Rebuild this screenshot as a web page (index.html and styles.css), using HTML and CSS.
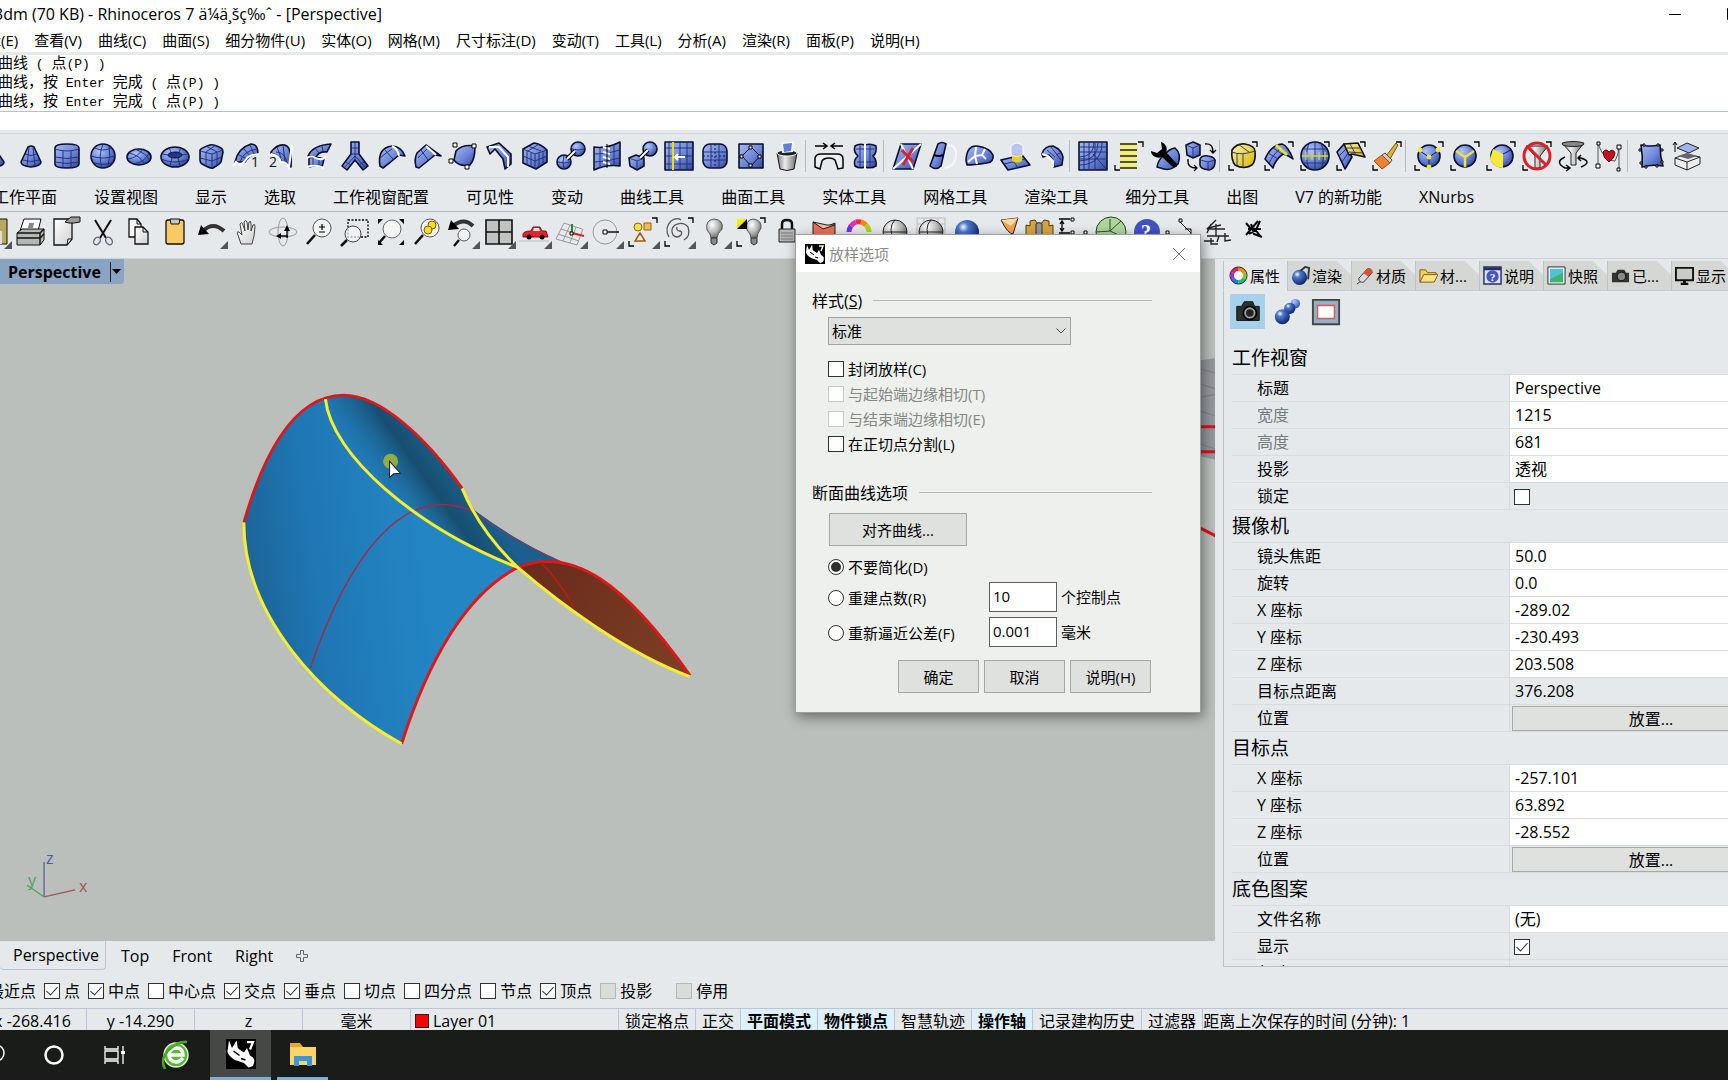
FILE: index.html
```html
<!DOCTYPE html>
<html lang="zh-CN">
<head>
<meta charset="utf-8">
<title>Rhinoceros 7 - [Perspective]</title>
<link rel="stylesheet" href="styles.css">
</head>
<body>
<svg class="defs" aria-hidden="true">
  <defs>
    <linearGradient id="bl" x1="0" y1="0" x2="1" y2="1"><stop offset="0" stop-color="#a9b9f4"/><stop offset=".55" stop-color="#6d86d8"/><stop offset="1" stop-color="#33479c"/></linearGradient>
    <radialGradient id="ball" cx=".35" cy=".3" r=".8"><stop offset="0" stop-color="#b4c6ff"/><stop offset=".5" stop-color="#6c88dc"/><stop offset="1" stop-color="#2f438f"/></radialGradient>
    <radialGradient id="deep" cx=".35" cy=".3" r=".8"><stop offset="0" stop-color="#fff"/><stop offset=".25" stop-color="#4d7bd0"/><stop offset="1" stop-color="#04175c"/></radialGradient>
    <radialGradient id="gray" cx=".35" cy=".3" r=".8"><stop offset="0" stop-color="#fff"/><stop offset=".5" stop-color="#b9bbb9"/><stop offset="1" stop-color="#555"/></radialGradient>
    <linearGradient id="metal" x1="0" x2="1"><stop offset="0" stop-color="#777"/><stop offset=".4" stop-color="#eee"/><stop offset="1" stop-color="#666"/></linearGradient>
    <linearGradient id="yel" x1="0" y1="0" x2="1" y2="1"><stop offset="0" stop-color="#fff59a"/><stop offset="1" stop-color="#d9b400"/></linearGradient>
    <linearGradient id="paper" x1="0" y1="0" x2="1" y2="1"><stop offset="0" stop-color="#fff"/><stop offset="1" stop-color="#cfd1cf"/></linearGradient>
    <linearGradient id="front" gradientUnits="userSpaceOnUse" x1="245" y1="330" x2="480" y2="300"><stop offset="0" stop-color="#1d6396"/><stop offset=".3" stop-color="#1f77b4"/><stop offset=".75" stop-color="#2485c4"/><stop offset="1" stop-color="#2485c4"/></linearGradient>
    <linearGradient id="inner" gradientUnits="userSpaceOnUse" x1="350" y1="210" x2="420" y2="160"><stop offset="0" stop-color="#1f78b5" stop-opacity="0"/><stop offset=".65" stop-color="#184e70"/><stop offset="1" stop-color="#1b5f8d"/></linearGradient>
    <linearGradient id="back" gradientUnits="userSpaceOnUse" x1="520" y1="260" x2="680" y2="410"><stop offset="0" stop-color="#65281a"/><stop offset="1" stop-color="#7e3e24"/></linearGradient>
    <symbol id="br" viewBox="0 0 32 32"><path d="M25 2h5v5M2 25v5h5" fill="none" stroke="#000" stroke-width="1.3"/></symbol>
    <symbol id="fl" viewBox="0 0 32 32" overflow="visible"><path d="M33 25v8h-8z" fill="#555"/></symbol>
    <symbol id="lens" viewBox="0 0 32 32"><circle cx="19" cy="12" r="9" fill="#f3f5f5" stroke="#555"/><path d="M12 19L4 28" stroke="#111" stroke-width="2.6"/></symbol>
    <symbol id="rhino" viewBox="0 0 20 20"><path d="M0 0h20v20H0z" fill="#000"/><path d="M2 1l2 5 3-5c1 3 0 5 2 6l3 2 2-3 2 5c4 2 3 4 2 7l-3 1-3-3-6-2C3 12 1 10 1 8z" fill="#fff"/><path d="M5 8l4 3M10 13l3 1" stroke="#000"/><path d="M14 2h4l-2 5" stroke="#fff" fill="none" stroke-width="1.5"/></symbol>
  </defs>
</svg>

<header class="titlebar">
  <h1>3dm (70 KB) - Rhinoceros 7 ä¼ä¸šç‰ˆ - [Perspective]</h1>
  <div class="winbtns">
    <button aria-label="最小化"><svg viewBox="0 0 12 12"><path d="M0 6.5h12" stroke="#000"/></svg></button>
    <button aria-label="最大化"><svg viewBox="0 0 12 12"><path d="M.5.5h11v11H.5z" stroke="#000" fill="none"/></svg></button>
  </div>
</header>
<nav class="menu">
  <a href="#">编辑(E)</a><a href="#">查看(V)</a><a href="#">曲线(C)</a><a href="#">曲面(S)</a><a href="#">细分物件(U)</a><a href="#">实体(O)</a><a href="#">网格(M)</a><a href="#">尺寸标注(D)</a><a href="#">变动(T)</a><a href="#">工具(L)</a><a href="#">分析(A)</a><a href="#">渲染(R)</a><a href="#">面板(P)</a><a href="#">说明(H)</a>
</nav>
<section class="history">
  <p>曲线<span> ( </span>点<span>(P) )</span></p>
  <p>曲线，按<span> Enter </span>完成<span> ( </span>点<span>(P) )</span></p>
  <p>曲线，按<span> Enter </span>完成<span> ( </span>点<span>(P) )</span></p>
</section>
<input class="command" aria-label="指令">

<div class="toolbar surface">
  <button aria-label="金字塔"><svg viewBox="0 0 32 32"><path class="b" d="M14 6L25 22Q25 26 16 27Q7 26 6 22z"/></svg></button>
  <button aria-label="圆锥"><svg viewBox="0 0 32 32"><path class="b" d="M13 7Q16 5 19 7L26 22Q26 26 16 27Q6 26 6 22z"/><path class="l" d="M14 7L12 26M18 7L20 26M10 14Q16 17 22 14M8 20Q16 23 24 20"/></svg></button>
  <button aria-label="圆柱"><svg viewBox="0 0 32 32"><path class="b" d="M4 8Q4 4 16 4T28 8V24Q28 28 16 28T4 24z"/><path class="l" d="M4 9Q16 13 28 9M12 11V28M20 11V28M4 17Q16 20 28 17M4 22Q16 25 28 22"/></svg></button>
  <button aria-label="球体"><svg viewBox="0 0 32 32"><circle class="s" cx="16" cy="16" r="12"/><path class="l" d="M4 16Q16 20 28 16M16 4Q11 16 15 28M22 6Q24 16 21 26M8 8Q16 12 24 8M7 23Q16 26 25 23"/></svg></button>
  <button aria-label="椭圆体"><svg viewBox="0 0 32 32"><ellipse class="s" cx="16" cy="17" rx="12" ry="8"/><path class="l" d="M6 13Q16 15 22 24M12 9Q24 14 26 20M5 19Q14 18 20 9M11 24Q22 22 26 13"/></svg></button>
  <button aria-label="环状体"><svg viewBox="0 0 32 32"><ellipse class="s" cx="16" cy="17" rx="14" ry="10"/><ellipse cx="16" cy="15" rx="7" ry="3" fill="#24367e" stroke="#0b1240"/><path class="l" d="M10 8L12 12M22 8L20 12M3 14L9 15M29 14L23 15M11 26L13 18M21 26L19 18M2 19Q16 25 30 19"/></svg></button>
  <button aria-label="圆角方块"><svg viewBox="0 0 32 32"><path class="b" d="M5 10Q6 8 15 5Q18 4 26 8Q28 9 28 12L26 22Q25 24 18 28Q16 29 7 24Q5 23 5 20z"/><path class="l" d="M5 11L17 14L28 10M17 14V28M11 6L22 12M21 5L11 12M11 12V26M22 13V25M5 18L17 21L27 17"/></svg></button>
  <button aria-label="边缘圆角"><svg viewBox="0 0 32 32"><path class="b" d="M4 22Q7 8 20 4Q27 4 27 14Q19 14 14 22z"/><path class="l" d="M8 15L16 19M13 9L19 16M19 5L23 14M9 22Q12 11 26 9"/><path d="M2 27l3-5 4 3 4-3 4-5 4-2 7-1" class="w"/><text x="20" y="27" class="n">1</text></svg></button>
  <button aria-label="双重圆角"><svg viewBox="0 0 32 32"><path class="b" d="M4 12Q12 2 20 6Q25 10 24 27Q20 22 15 22Q12 15 4 13z"/><path class="l" d="M10 7L14 18M16 5L18 22M9 12Q18 12 20 23"/><path d="M4 14q8 1 10 8 6 0 8 5l3-22" class="w"/><text x="2" y="27" class="n">2</text></svg></button>
  <button aria-label="混接曲面"><svg viewBox="0 0 32 32"><path class="b" d="M5 16Q10 5 28 4L24 12Q16 11 13 17z"/><path class="b" d="M6 18Q14 16 21 19L19 27Q13 25 6 27z"/><path class="l" d="M12 8L16 13M19 6L20 11M10 18V26M16 18V25"/><path d="M4 18q4-3 9 0t10-1M4 27q8-3 17 1" class="w"/></svg></button>
  <button aria-label="圆管"><svg viewBox="0 0 32 32"><path class="b" d="M12 2h8v12l9 12-5 4-8-10-8 10-5-4 9-12z"/><path class="l" d="M16 2v18M12 8h8M12 14h8M7 22l5 3M25 22l-5 3M16 16L5 28M16 16L27 28"/></svg></button>
  <button aria-label="曲面一"><svg viewBox="0 0 32 32"><path class="b" d="M5 26Q2 8 17 6Q26 6 30 16L24 15Q16 22 8 28z"/><path class="l" d="M10 10L18 19M5 18Q12 12 17 9"/><path d="M17 6Q23 9 24 16" class="w"/></svg></button>
  <button aria-label="曲面二"><svg viewBox="0 0 32 32"><path class="b" d="M5 27Q3 19 6 13L15 5L30 16L24 15L8 28z"/><path class="l" d="M10 10L17 20M7 18L16 9"/><path d="M15 6L25 15" class="w"/></svg></button>
  <button aria-label="控制点曲面"><svg viewBox="0 0 32 32"><path class="b" d="M9 11Q15 4 28 6Q28 20 23 25Q12 27 7 20z"/><path class="h" d="M6 3h4v4H6zM25 4h4v4h-4zM2 19h4v4H2zM18 25h4v4h-4z"/></svg></button>
  <button aria-label="偏移曲面"><svg viewBox="0 0 32 32"><path class="b" d="M4 7L16 3L28 14V24L22 29L20 19L12 9L7 14z"/><path class="w" d="M6 7h10l9 10v10"/></svg></button>
  <button aria-label="方块"><svg viewBox="0 0 32 32"><path class="b" d="M4 9L15 3Q22 4 28 10V22L17 29L4 23z"/><path class="l" d="M4 9L16 14L28 10M16 14V29M8 11V25M12 13V27M20 13V27M24 11V24M4 16L16 21L28 16M9 6L22 11M20 4L9 11"/></svg></button>
  <button aria-label="衔接"><svg viewBox="0 0 32 32"><circle class="s" cx="23" cy="9" r="7"/><circle class="s" cx="9" cy="22" r="7"/><path class="l" d="M3 22q6 2 12 0M9 15q-2 7 0 14M17 9q6 2 12 0"/><path d="M12 19l8-8" stroke="#000" stroke-width="4"/><path d="M12 19l8-8" stroke="#fff" stroke-width="2"/></svg></button>
  <button aria-label="缝合"><svg viewBox="0 0 32 32"><path class="b" d="M3 7Q15 9 29 2V26Q16 24 3 30z"/><path class="l" d="M3 14Q15 15 29 10M3 22Q15 22 29 18M9 8V28M23 5V26"/><path class="w" d="M12 7l7 2M12 12l7 2M12 17l7 2M12 22l7 2"/><path d="M16 4v24" stroke="#000"/></svg></button>
  <button aria-label="转换"><svg viewBox="0 0 32 32"><circle class="s" cx="23" cy="9" r="7"/><path class="b" d="M2 18L9 15L17 18V26L10 30L3 26z"/><path class="l" d="M2 18L10 21L17 18M10 21V30"/><path d="M13 18l8-8" stroke="#000" stroke-width="4"/><path d="M13 18l8-8" stroke="#fff" stroke-width="2"/></svg></button>
  <button aria-label="插入结点"><svg viewBox="0 0 32 32"><path class="b" d="M2 2h28v28H2z"/><path class="l" d="M2 8h28M2 16h28M2 24h28M6 2v28M17 2v28M24 2v28"/><path d="M10 2v28" stroke="#e8e000" stroke-width="2"/><path class="w" d="M22 17H12l3-3m-3 3l3 3"/></svg></button>
  <button aria-label="重建曲面"><svg viewBox="0 0 32 32"><rect class="b" x="4" y="4" width="24" height="24" rx="7"/><path class="l" d="M4 12h24M4 20h24M12 4v24M20 4v24"/><path d="M4 16h24M16 4v24" stroke="#101850" stroke-dasharray="2 2"/></svg></button>
  <button aria-label="显示控制点"><svg viewBox="0 0 32 32"><path class="b" d="M4 4h24v24H4z"/><path d="M16 7L25 16L16 26L7 16z" fill="none" stroke="#111"/><path class="h" d="M14 6h3v3h-3zM23 15h3v3h-3zM14 24h3v3h-3zM5 15h3v3H5z"/></svg></button>
  <button aria-label="删除"><svg viewBox="0 0 32 32"><path d="M6 13L9 29Q16 32 23 29L26 13z" fill="url(#metal)" stroke="#111"/><ellipse cx="16" cy="13" rx="10" ry="3" fill="#222" stroke="#eee"/><path d="M10 3l13-2-1 11-11 1z" fill="#f4f6fb"/><path d="M12 4l9-1-1 8-7 1z" fill="#5f7ed8"/></svg></button>
  <i></i>
  <button aria-label="对齐边缘"><svg viewBox="0 0 32 32"><path d="M2 6h11M30 6H19M10 3l4 3-4 3M22 3l-4 3 4 3" fill="none" stroke="#000" stroke-width="1.5"/><path d="M2 27V18Q3 14 8 14H24Q30 14 30 19V28L25 29L22 20Q20 18 16 18Q11 18 9 21L7 29z" fill="#eceeee" stroke="#000" stroke-width="1.5"/></svg></button>
  <button aria-label="对称"><svg viewBox="0 0 32 32"><path class="b" d="M6 6Q10 3 16 5Q22 3 27 6Q28 13 24 16Q28 20 27 26Q22 29 16 27Q10 29 6 26Q4 20 9 16Q4 12 6 6z"/><path class="l" d="M7 9h18M8 22h18M11 5v22M21 5v22"/><path class="w" d="M16 4v25"/></svg></button>
  <i></i>
  <button aria-label="取消修剪"><svg viewBox="0 0 32 32"><path class="b" d="M10 4H30L22 29H2z"/><path class="w" d="M10 4L22 29M30 4L2 29"/><path d="M11 10L22 22M22 8L12 25" stroke="#d5232f" stroke-width="3"/></svg></button>
  <button aria-label="板材"><svg viewBox="0 0 32 32"><path d="M18 28Q30 26 29 12Q28 4 20 6" fill="none" stroke="#f5f7f7" stroke-width="2"/><path class="b" d="M11 4Q15 1 19 4L14 26Q9 31 3 26z"/><path d="M7 15q5 2 9 0" stroke="#000" stroke-width="2" fill="none"/></svg></button>
  <button aria-label="嵌面"><svg viewBox="0 0 32 32"><path class="b" d="M3 20Q4 5 14 6Q27 8 30 15Q31 22 24 23Q10 25 4 25z"/><path class="w" d="M12 16l7-1 4 4M12 16l-7 6M12 16l1-9M19 15l3-6M14 24l-2-8"/></svg></button>
  <button aria-label="拉伸面"><svg viewBox="0 0 32 32"><path class="b" d="M2 20L23 15L31 25L9 30z"/><path class="l" d="M12 17L19 28M5 24L27 19"/><path d="M13 14v7q5 3 10 0v-7z" fill="#e6cf27"/><path d="M12 6v9q6 3 12 0V6q-6-6-12 0z" fill="#b0bcf0" opacity=".8" stroke="#fff"/></svg></button>
  <button aria-label="弯管"><svg viewBox="0 0 32 32"><path class="b" d="M7 14Q9 6 18 6Q27 10 28 17L27 25L19 27L18 20L14 15L8 17z"/><path class="l" d="M12 10L20 17M16 7L26 20M21 15l6-3"/><path class="w" d="M7 14l6 2 5 5v6"/></svg></button>
  <i></i>
  <button aria-label="网格"><svg viewBox="0 0 32 32"><path class="b" d="M2 2h28v28H2z"/><path class="l" d="M2 7h28M2 12h28M7 2v28M12 2v28M2 17Q17 17 17 2M2 21Q21 21 21 2M2 25Q25 25 25 2M16 14L30 30M2 19H30M18 2V30"/></svg></button>
  <button aria-label="点列"><svg viewBox="0 0 32 32"><use href="#br"/><path d="M7 3h17v26H7z" fill="#f4ec7c"/><path d="M7 4h17M7 10h17M7 16h17M7 22h17M7 28h17" stroke="#222" stroke-width="1.5"/></svg></button>
  <button aria-label="网格工具"><svg viewBox="0 0 32 32"><path class="b" d="M8 27Q9 20 15 15Q20 9 26 8Q33 14 29 24Q22 31 15 29z"/><path d="M12 2C17 4 19 8 17 12L28 24Q29 28 24 27L13 17C8 19 2 16 2 11L8 13L13 9z" fill="#000"/></svg></button>
  <button aria-label="转换网格"><svg viewBox="0 0 32 32"><path class="b" d="M1 5L8 2L15 5V15L8 18L2 15z"/><path class="b" d="M15 19Q17 15 23 16Q31 17 30 22Q30 29 24 30Q15 29 15 25z"/><path class="l" d="M1 5L8 8L15 5M8 8V18M15 20L23 22L30 20M23 22V30"/><path d="M20 4q8-1 8 8m-3-2l3 3 3-3M3 19q-1 9 8 9m-2-3l3 3-3 3" fill="none" stroke="#000" stroke-width="1.3"/></svg></button>
  <i></i>
  <button aria-label="细分"><svg viewBox="0 0 32 32"><use href="#br"/><path class="y" d="M5 10Q10 3 18 4Q28 6 28 11Q29 21 25 25Q17 30 8 25Q4 20 5 10z"/><path class="l" d="M5 12Q14 16 28 11M16 14V28M11 4L22 12M10 13V27"/></svg></button>
  <button aria-label="桥接"><svg viewBox="0 0 32 32"><use href="#br"/><path class="b" d="M2 19Q8 5 19 4Q25 6 30 19Q25 15 20 14Q12 20 10 28z"/><path class="l" d="M5 13L15 19M10 8L19 14M6 23Q12 12 18 8"/><path d="M13 5L24 15" stroke="#eee326" stroke-width="3"/></svg></button>
  <button aria-label="细分球"><svg viewBox="0 0 32 32"><use href="#br"/><circle class="s" cx="16" cy="16" r="14"/><path class="l" d="M2 16h28M4 9h24M4 23h24M16 2v28M10 3q-5 13 0 26M22 3q5 13 0 26"/><path d="M3 16h26" stroke="#e8df3c" stroke-width="1.5"/><path d="M7 12v8M13 12v8M20 12v8M26 12v8" stroke="#e8df3c"/></svg></button>
  <button aria-label="折边"><svg viewBox="0 0 32 32"><use href="#br"/><path class="b" d="M2 12L9 4L17 17L10 29z"/><path class="y" d="M9 4L23 3L30 17L17 14L14 15z"/><path class="l" d="M4 16L12 8M7 22L14 12M12 8L26 8M14 12L28 13M15 4L21 15"/></svg></button>
  <button aria-label="笔刷"><svg viewBox="0 0 32 32"><use href="#br"/><path d="M25 3l2 2-8 14-4-3z" fill="#d9b437" stroke="#7a5a10"/><path d="M14 13l7 7-2 3-8-8z" fill="#ccc" stroke="#555"/><path d="M11 15l8 8-8 6-8-8z" fill="#ee8433" stroke="#9a4d12"/></svg></button>
  <i></i>
  <button aria-label="选取顶点"><svg viewBox="0 0 32 32"><use href="#br"/><circle class="s" cx="16" cy="16" r="11"/><path d="M16 17V27M16 17L7 11M16 17L25 11" stroke="#101850"/><g fill="#f5e832"><circle cx="16" cy="17" r="2.4"/><circle cx="16" cy="27" r="2.4"/><circle cx="7" cy="10" r="2.4"/><circle cx="25" cy="10" r="2.4"/></g></svg></button>
  <button aria-label="选取边"><svg viewBox="0 0 32 32"><use href="#br"/><circle class="s" cx="16" cy="16" r="11"/><path d="M16 17V27M16 17L7 11M16 17L25 11" stroke="#efe23a" stroke-width="2.5"/></svg></button>
  <button aria-label="选取面"><svg viewBox="0 0 32 32"><use href="#br"/><circle class="s" cx="17" cy="16" r="11"/><path d="M8 9L18 14V28Q9 28 5 19z" fill="#f4e93c"/><path d="M18 14L26 10" stroke="#101850"/></svg></button>
  <button aria-label="禁用过滤"><svg viewBox="0 0 32 32"><use href="#br"/><path d="M5 6h22L19 16V28H14V16z" fill="url(#metal)" stroke="#222"/><circle cx="16" cy="16" r="13" fill="none" stroke="#dd1f28" stroke-width="3"/><path d="M7 7L25 25" stroke="#dd1f28" stroke-width="3"/></svg></button>
  <button aria-label="过滤"><svg viewBox="0 0 32 32"><path d="M5 3h22L19 13V25H14V13z" fill="url(#metal)" stroke="#222"/><ellipse cx="16" cy="4" rx="11" ry="2.5" fill="#888" stroke="#222"/><path d="M8 17Q-3 22 8 28h5m-4-3l4 3-4 3M24 27Q36 22 24 18h-3m3-3l-3 3 3 3" fill="none" stroke="#000" stroke-width="1.5"/></svg></button>
  <button aria-label="历史"><svg viewBox="0 0 32 32"><path d="M5 4V26M5 4Q12 22 22 21Q26 14 26 6M26 6V29" fill="none" stroke="#555"/><path d="M10 12q3-4 6 0 4-4 6 1 0 5-6 9-6-4-6-10z" fill="#c61020" stroke="#500"/><path class="h" d="M4 2h3v3H4zM24 5h4v4h-4zM3 24h4v4H3zM24 28h3v3h-3z"/></svg></button>
  <i></i>
  <button aria-label="平面"><svg viewBox="0 0 32 32"><path class="b" d="M6 5Q14 7 25 5Q25 16 28 26Q17 24 7 27Q8 16 6 5z"/><path class="h" d="M8 4h2v2H8zM22 4h2v2h-2zM4 9h2v2H4zM26 9h2v2h-2zM5 22h2v2H5zM26 21h2v2h-2zM10 26h2v2h-2zM21 25h2v2h-2z"/></svg></button>
  <button aria-label="图层"><svg viewBox="0 0 32 32"><path d="M4 18L15 14L29 17V24L16 30L4 25z" fill="#eee" stroke="#222"/><path d="M4 18L16 22L29 17M16 22V30" stroke="#222" fill="none"/><path d="M7 16L16 13L26 16L17 19z" fill="#666"/><path d="M6 8L16 3L28 8L18 13z" fill="#9db3f2" stroke="#222"/><path d="M4 12V2M2 5l2-3 2 3" stroke="#000" fill="none"/></svg></button>
</div>

<nav class="tabs">
  <a href="#">工作平面</a><a href="#">设置视图</a><a href="#">显示</a><a href="#">选取</a><a href="#">工作视窗配置</a><a href="#">可见性</a><a href="#">变动</a><a href="#">曲线工具</a><a href="#">曲面工具</a><a href="#">实体工具</a><a href="#">网格工具</a><a href="#">渲染工具</a><a href="#">细分工具</a><a href="#">出图</a><a href="#">V7 的新功能</a><a href="#">XNurbs</a>
</nav>

<div class="toolbar standard">
  <button aria-label="保存"><svg viewBox="0 0 32 32"><path d="M4 3H28V28H4z" fill="#b9a95c" stroke="#111"/><path d="M9 15h14v13H9z" fill="#ddd"/><use href="#fl"/></svg></button>
  <button aria-label="打印"><svg viewBox="0 0 32 32"><path d="M9 3H26L23 15H5z" fill="#fff" stroke="#111"/><path d="M14 7h5l-1 5h-5z" fill="#888"/><path d="M2 17L7 13H29V24L25 29H2z" fill="#b5b7b5" stroke="#111"/><path d="M2 17H25L29 13M2 22H25L29 18M25 17V29" stroke="#111" fill="none" stroke-width="1.4"/></svg></button>
  <button aria-label="文件属性"><svg viewBox="0 0 32 32"><path d="M3 3H21V23L16 29H3z" fill="url(#paper)" stroke="#111" stroke-width="1.3"/><path d="M16 29l1-6h4z" fill="#fff" stroke="#111"/><path d="M14 6l6-5h9v5l-6 1h-5z" fill="#9a9c9a" stroke="#111"/></svg></button>
  <button aria-label="剪切"><svg viewBox="0 0 32 32"><path d="M8 4L19 22M24 4L13 22" stroke="#111" stroke-width="2"/><ellipse cx="10" cy="25" rx="3" ry="4" fill="none" stroke="#667" stroke-width="1.4" transform="rotate(35 10 25)"/><ellipse cx="22" cy="25" rx="3" ry="4" fill="none" stroke="#667" stroke-width="1.4" transform="rotate(-35 22 25)"/></svg></button>
  <button aria-label="复制"><svg viewBox="0 0 32 32"><path d="M6 3H14L18 8V21H6z" fill="#f4f5f4" stroke="#111" stroke-width="1.3"/><path d="M12 11H20L25 16V28H12z" fill="url(#paper)" stroke="#111" stroke-width="1.3"/><path d="M20 11v5h5M14 3v5h4" fill="none" stroke="#111"/></svg></button>
  <button aria-label="粘贴"><svg viewBox="0 0 32 32"><rect x="7" y="4" width="18" height="24" rx="2" fill="#fac864" stroke="#111" stroke-width="1.3"/><path d="M11 3h10l-1 5h-8z" fill="#c4c5c4" stroke="#111"/></svg></button>
  <button aria-label="撤销"><svg viewBox="0 0 32 32"><path d="M8 15Q18 5 29 15" fill="none" stroke="#333" stroke-width="4"/><path d="M3 19L6 9L14 18z" fill="#000"/><use href="#fl"/></svg></button>
  <button aria-label="平移"><svg viewBox="0 0 32 32"><path d="M10 28L7 19Q5 15 8 16L11 19L9 8Q11 5 12 9L14 15L13 6Q15 3 16 6L17 14L18 6Q20 4 20 8V15L22 9Q24 7 24 11L23 20L21 28z" fill="url(#paper)" stroke="#444"/></svg></button>
  <button aria-label="旋转视图"><svg viewBox="0 0 32 32"><ellipse cx="16" cy="16" rx="14" ry="5" fill="none" stroke="#999"/><ellipse cx="16" cy="16" rx="5" ry="14" fill="none" stroke="#999"/><path d="M11 20h10M20 22V12" stroke="#000" stroke-width="1.3"/><path d="M9 20l5-3v6zM20 9l-3 6h6z" fill="#000"/></svg></button>
  <button aria-label="动态缩放"><svg viewBox="0 0 32 32"><use href="#lens"/><path d="M16 11h6M19 8v6M16 16h6" stroke="#000" stroke-width="1.2"/></svg></button>
  <button aria-label="框选缩放"><svg viewBox="0 0 32 32"><path d="M9 4h20v17H9z" fill="none" stroke="#000" stroke-width="1.3" stroke-dasharray="2 1.5"/><circle cx="14" cy="18" r="8" fill="#f3f5f5" fill-opacity=".7" stroke="#444"/><path d="M8 24L2 30" stroke="#111" stroke-width="2.5"/></svg></button>
  <button aria-label="缩放至范围"><svg viewBox="0 0 32 32"><circle cx="17" cy="13" r="9" fill="#f3f5f5" stroke="#666"/><path d="M10 20L4 27" stroke="#111" stroke-width="2.5"/><path d="M3 3h5L3 8zM29 3h-5l5 5zM3 29h5l-5-5zM29 29h-5l5-5z" fill="#000"/></svg></button>
  <button aria-label="缩放选取"><svg viewBox="0 0 32 32"><use href="#lens"/><circle cx="21" cy="9" r="4" fill="#f7e017" stroke="#850"/><circle cx="17" cy="14" r="4" fill="#f7e017" stroke="#850"/></svg></button>
  <button aria-label="上一视图"><svg viewBox="0 0 32 32"><path d="M6 10Q17 1 26 10" fill="none" stroke="#333" stroke-width="4"/><path d="M1 14L4 4L12 13z" fill="#000"/><circle cx="17" cy="19" r="6" fill="#f3f5f5" stroke="#555"/><path d="M12 24L7 30" stroke="#111" stroke-width="2.4"/><use href="#fl"/></svg></button>
  <button aria-label="四视图"><svg viewBox="0 0 32 32"><path d="M3 4H29V28H3zM16 4V28M3 16H29" fill="#c1c3c1" stroke="#111" stroke-width="1.6"/><use href="#fl"/></svg></button>
  <button aria-label="右视图"><svg viewBox="0 0 32 32"><path d="M4 18Q5 15 12 15L14 11H21L23 15H27L29 21H4z" fill="#e0252d" stroke="#8a0d12"/><path d="M15 12h5l1 3h-7z" fill="#dfe8ee"/><path d="M0 25h30" stroke="#bbb"/><circle cx="10" cy="21" r="2.5"/><circle cx="23" cy="21" r="2.5"/><use href="#fl"/></svg></button>
  <button aria-label="工作平面"><svg viewBox="0 0 32 32"><path d="M9 7L27 13M6 13L25 19M3 18L24 25M1 23L22 29M9 7L1 23M15 9L8 25M21 11L15 27M28 13L22 29" stroke="#999" fill="none"/><path d="M17 17V8" stroke="#1a8c2d" stroke-width="2"/><path d="M17 17L29 20" stroke="#c22" stroke-width="2"/><path class="h" d="M15 16h3v3h-3z"/><use href="#fl"/></svg></button>
  <button aria-label="视图半径"><svg viewBox="0 0 32 32"><circle cx="14" cy="16" r="12" fill="none" stroke="#999"/><path d="M14 16H28" stroke="#000" stroke-width="1.4"/><path class="h" d="M12 14h4v4h-4z"/><use href="#fl"/></svg></button>
  <button aria-label="选取工具"><svg viewBox="0 0 32 32"><use href="#br"/><circle cx="11" cy="11" r="4" fill="#fbe03b" stroke="#862"/><path d="M17 7h7v7h-7z" fill="#f8b94d" stroke="#862"/><path d="M13 17l5 8H8z" fill="#eee" stroke="#a50" stroke-width="1.5"/><use href="#fl"/></svg></button>
  <button aria-label="隐藏"><svg viewBox="0 0 32 32"><use href="#br"/><path d="M16 15q4 0 2 4-4 4-8 0-3-6 2-10 8-4 13 2 3 9-4 13M16 15q-3-1-2-4M6 21Q1 12 8 5q6-4 10-1" fill="none" stroke="#555" stroke-width="1.3"/><use href="#fl"/></svg></button>
  <button aria-label="灯光"><svg viewBox="0 0 32 32"><path d="M12 22Q12 18 8 14Q6 4 15 3Q25 4 23 13Q18 18 18 22z" fill="url(#gray)" stroke="#555"/><path d="M12 22h6v5l-3 2-3-2z" fill="#888" stroke="#333"/><use href="#fl"/></svg></button>
  <button aria-label="灯光切换"><svg viewBox="0 0 32 32"><use href="#br"/><path d="M16 22Q16 18 12 14Q10 4 18 3Q27 4 26 12Q22 18 22 22z" fill="url(#gray)" stroke="#555"/><path d="M16 22h6v5l-3 2-3-2z" fill="#888" stroke="#333"/><path d="M2 3h10v10H2z"/><path d="M2 3h10L2 13z" fill="#f9e800"/></svg></button>
  <button aria-label="锁定"><svg viewBox="0 0 32 32"><path d="M11 14V8Q11 4 16 4T21 8V14" fill="none" stroke="#111" stroke-width="2.5"/><path d="M8 13h16v13H8z" fill="#b4b6b4" stroke="#222"/><path d="M10 17h12M10 20h12M10 23h12" stroke="#777"/></svg></button>
  <button aria-label="图层"><svg viewBox="0 0 32 32"><path d="M6 6l10 6 12-5v22H6z" fill="#e87057" stroke="#222"/><path d="M6 6l10 7L28 9l-8 0z" fill="#f8b9a5" stroke="#222"/></svg></button>
  <button aria-label="属性"><svg viewBox="0 0 32 32"><g fill="none" stroke-width="5"><path d="M6 16A10 10 0 0 1 8 10" stroke="#7a2be8"/><path d="M8 10A10 10 0 0 1 13 6" stroke="#e22bc0"/><path d="M13 6A10 10 0 0 1 18 6" stroke="#fb2640"/><path d="M18 6A10 10 0 0 1 23 9" stroke="#ff8200"/><path d="M23 9A10 10 0 0 1 26 16" stroke="#abd41a"/></g></svg></button>
  <button aria-label="着色"><svg viewBox="0 0 32 32"><circle cx="16" cy="16" r="12" fill="url(#gray)" stroke="#222"/><path d="M16 4Q8 11 16 28M4 16h24" fill="none" stroke="#222"/></svg></button>
  <button aria-label="网格着色"><svg viewBox="0 0 32 32"><path d="M2 2h28M2 8h28M2 14h28M2 2v20M9 2v20M16 2v20M23 2v20M30 2v20" stroke="#bbb"/><circle cx="16" cy="16" r="12" fill="url(#gray)" stroke="#222"/><path d="M16 4Q8 11 16 28M4 16h24" fill="none" stroke="#222"/></svg></button>
  <button aria-label="渲染"><svg viewBox="0 0 32 32"><circle cx="16" cy="16" r="12" fill="url(#deep)"/></svg></button>
  <button aria-label="聚光灯"><svg viewBox="0 0 32 32"><path d="M14 4L31 2L26 18Q21 18 14 4z" fill="#f3a04a" stroke="#222"/><path d="M14 4L31 2L24 10z" fill="#fbdca0"/></svg></button>
  <button aria-label="选项"><svg viewBox="0 0 32 32"><path d="M3 9l4 1V5l5-1 2 3h5l2-3 5 1v5l4-1v13H3z" fill="#d8a440" stroke="#543a08"/><path d="M13 8q3-3 6 0v12h-6z" fill="#999" stroke="#333"/></svg></button>
  <button aria-label="尺寸标注"><svg viewBox="0 0 32 32"><path d="M0 3h11M0 17h11M3 6v9M1 8l2-3 2 3M1 12l2 3 2-3" stroke="#000" fill="none" stroke-width="1.3"/><path class="h" d="M12 2h3v3h-3zM12 15h3v3h-3zM25 15h3v3h-3z"/></svg></button>
  <button aria-label="脚本"><svg viewBox="0 0 32 32"><circle cx="16" cy="16" r="15" fill="#aed59b" stroke="#263f20"/><path d="M1 16l14-1L26 5M15 3v12l13 6" stroke="#2c4b24" fill="none"/></svg></button>
  <button aria-label="帮助"><svg viewBox="0 0 32 32"><circle cx="16" cy="16" r="13" fill="#3f53c4"/><text x="10" y="23" class="q">?</text></svg></button>
  <button aria-label="连线"><svg viewBox="0 0 32 32"><path d="M13 6L24 17M18 13h6v6" stroke="#000" fill="none"/><path class="h" d="M12 3h3v3h-3zM-1 15h3v3h-3z"/></svg></button>
  <button aria-label="插件一"><svg viewBox="0 0 32 32"><path d="M4 13h18M8 8l-4 9M13 4l-8 8 13-3M13 8v12M4 20h22M1 25h10M8 22v6h7M16 20l-2 6M22 17v8l6-1" stroke="#222" fill="none" stroke-width="1.4"/></svg></button>
  <button aria-label="插件二"><svg viewBox="0 0 32 32"><path d="M7 7l5 6M7 19l6-7 6-7M9 13h13M12 8l3 10 8 3M21 5l-4 9-7 4M15 12l7 9" stroke="#000" fill="none" stroke-width="2"/></svg></button>
</div>

<main>
  <section class="left">
    <div class="viewport">
      <svg class="scene" viewBox="0 0 1215 681" preserveAspectRatio="xMinYMin slice">
        <path d="M1199 101L1215 99V201L1199 197z" fill="#94979c"/>
        <path d="M1199 110l16 4M1199 125l16 5M1199 138l16-3M1199 152l16 5M1199 185l16 5" stroke="#7d8086"/>
        <path d="M1195 167.5H1215M1195 192.5H1215M1195 267L1215 277" stroke="#de1219" stroke-width="3"/>
        <path d="M243.5 263C260 205 290 136 343 136C380 136 425 178 461.5 229C466 240 470 246 475 252C505 274 530 288 562 303C545 301 530 303 517 308C465 335 428 400 401 484C320 440 243 355 243.5 263z" fill="url(#front)"/>
        <path d="M325 140C330 137 338 136 343 136C380 136 425 178 461.5 229C466 240 470 246 475 252C505 274 530 288 562 303C545 301 530 303 517 308C415 268 331 196 325 140z" fill="url(#inner)"/>
        <path d="M517 308C572 286 625 325 689 417C625 393 560 345 517 308z" fill="url(#back)"/>
        <path d="M310 408C345 305 400 220 472 252" fill="none" stroke="#a02c4b" stroke-width="1.5"/>
        <path d="M472 252Q510 280 560 302" fill="none" stroke="#8a3a5c"/>
        <path d="M541 304Q560 323 573 348" fill="none" stroke="#c41815" stroke-width="1.5"/>
        <path d="M243.5 263C260 205 290 136 343 136C380 136 425 178 461.5 229" fill="none" stroke="#dc181b" stroke-width="2.8"/>
        <path d="M401 484C428 400 465 335 517 308C572 286 625 325 689 416" fill="none" stroke="#dc181b" stroke-width="3"/>
        <path d="M243.5 263C243 355 320 440 401 484M325 140C331 196 415 268 517 308M461.5 229C475 262 495 287 517 308C560 345 625 393 689 417" fill="none" stroke="#f4ef31" stroke-width="3"/>
        <circle cx="390" cy="202" r="7.5" fill="#90ac45"/>
        <path d="M389 202v16l4-3.5 7-.5z" fill="#fff" stroke="#222"/>
        <g fill="none" stroke-width="1.2"><path d="M44 637V602" stroke="#55579c"/><path d="M44 637L75 630" stroke="#a15454"/><path d="M44 637L27 625" stroke="#55a055"/></g>
        <g class="axis"><text x="46" y="604" fill="#55579c">z</text><text x="79" y="632" fill="#a15454">x</text><text x="28" y="626" fill="#55a055">y</text></g>
      </svg>
      <button class="viewname"><span>Perspective</span><svg viewBox="0 0 14 24"><path d="M.5 2v20" stroke="#222"/><path d="M2 9h9l-4.500 5z" fill="#000"/></svg></button>
    </div>
    <nav class="viewtabs"><a href="#" class="on">Perspective</a><a href="#">Top</a><a href="#">Front</a><a href="#">Right</a><button aria-label="新增"><svg viewBox="0 0 12 12"><path d="M4.500.5h3v4h4v3h-4v4h-3v-4h-4v-3h4z" fill="none" stroke="#666"/></svg></button></nav>
  </section>

  <aside class="panel">
    <nav class="ptabs">
      <a href="#" class="on"><svg viewBox="0 0 20 20"><g fill="none" stroke-width="4"><path d="M10 3A7 7 0 0 1 16 7" stroke="#f08a00"/><path d="M16 7A7 7 0 0 1 16 13" stroke="#8ecb1c"/><path d="M16 13A7 7 0 0 1 10 17" stroke="#21c070"/><path d="M10 17A7 7 0 0 1 4 13" stroke="#1f78e8"/><path d="M4 13A7 7 0 0 1 4 7" stroke="#a52be0"/><path d="M4 7A7 7 0 0 1 10 3" stroke="#ec2050"/></g><circle cx="10" cy="10" r="4.500" fill="#fff"/><circle cx="10" cy="10" r="9" fill="none" stroke="#222"/></svg>属性</a>
      <a href="#"><svg viewBox="0 0 20 20"><circle cx="9" cy="12" r="8" fill="url(#deep)"/><path d="M10 5l5-4 4 1-1 12" stroke="#333" stroke-width="2" fill="none"/></svg>渲染</a>
      <a href="#"><svg viewBox="0 0 20 20"><path d="M6 16L2 19" stroke="#333"/><path d="M4 13l9-10q5-1 5 4L9 17q-5 1-5-4z" fill="#d9dbd9" stroke="#333"/><path d="M9 8l4-5q5-1 5 4l-4 4z" fill="#e0502c"/></svg>材质</a>
      <a href="#"><svg viewBox="0 0 20 20"><path d="M1 17V4h6l2 3h9v3" fill="#f5cf5e" stroke="#7a5a14"/><path d="M1 17l4-8h15l-4 8z" fill="#fbdf86" stroke="#7a5a14"/></svg>材...</a>
      <a href="#"><svg viewBox="0 0 20 20"><path d="M1 1h18v18H1z" fill="#dfe4f5" stroke="#222c66" stroke-width="1.5"/><path d="M1 3h18" stroke="#222c66" stroke-width="3"/><circle cx="10" cy="11" r="6.500" fill="#4458c4"/><text x="7" y="16" class="qs">?</text></svg>说明</a>
      <a href="#"><svg viewBox="0 0 20 20"><path d="M1 1h18v18H1z" fill="#fff" stroke="#222"/><path d="M3 3h14v14H3z" fill="#54c0d8"/><path d="M3 14L17 7V17H3z" fill="#3cb46c"/></svg>快照</a>
      <a href="#"><svg viewBox="0 0 20 20"><path d="M1 7h4l2-3h7l2 3h3v10H1z" fill="#333"/><circle cx="11" cy="11" r="4.500" fill="#888" stroke="#111"/></svg>已...</a>
      <a href="#"><svg viewBox="0 0 20 20"><path d="M1 2h18v13H1z" fill="#c9cbc9" stroke="#111" stroke-width="2"/><path d="M6 19h8M10 15v4" stroke="#111" stroke-width="3"/></svg>显示</a>
    </nav>
    <div class="pbody">
      <div class="ptools">
        <button class="on" aria-label="相机"><svg viewBox="0 0 32 32"><path d="M4 10h5l3-5h9l2 5h5v15H4z" fill="#2c302e" stroke="#111"/><circle cx="18" cy="17" r="7" fill="#9aa09d" stroke="#000" stroke-width="2"/><circle cx="18" cy="17" r="4" fill="#222"/></svg></button>
        <button aria-label="材质球"><svg viewBox="0 0 32 32"><circle cx="25" cy="7" r="5" fill="url(#ball)"/><circle cx="19" cy="12" r="6" fill="url(#deep)"/><circle cx="11" cy="21" r="8" fill="url(#deep)"/></svg></button>
        <button aria-label="底图"><svg viewBox="0 0 32 32"><path d="M2 3h28v26H2z" fill="#93b1c6" stroke="#444" stroke-width="2"/><path d="M7 9h18v14H7z" fill="#fff" stroke="#d65757" stroke-width="1.5"/></svg></button>
      </div>
      <table>
        <colgroup><col class="cl"><col></colgroup>
        <tr><th colspan="2">工作视窗</th></tr>
        <tr><td>标题</td><td class="v">Perspective</td></tr>
        <tr><td class="dim">宽度</td><td class="v">1215</td></tr>
        <tr><td class="dim">高度</td><td class="v">681</td></tr>
        <tr><td>投影</td><td class="v">透视</td></tr>
        <tr><td><label for="lock">锁定</label></td><td><input type="checkbox" id="lock"></td></tr>
        <tr><th colspan="2">摄像机</th></tr>
        <tr><td>镜头焦距</td><td class="v">50.0</td></tr>
        <tr><td>旋转</td><td class="v">0.0</td></tr>
        <tr><td>X 座标</td><td class="v">-289.02</td></tr>
        <tr><td>Y 座标</td><td class="v">-230.493</td></tr>
        <tr><td>Z 座标</td><td class="v">203.508</td></tr>
        <tr><td>目标点距离</td><td>376.208</td></tr>
        <tr><td>位置</td><td class="act"><button>放置...</button></td></tr>
        <tr><th colspan="2">目标点</th></tr>
        <tr><td>X 座标</td><td class="v">-257.101</td></tr>
        <tr><td>Y 座标</td><td class="v">63.892</td></tr>
        <tr><td>Z 座标</td><td class="v">-28.552</td></tr>
        <tr><td>位置</td><td class="act"><button>放置...</button></td></tr>
        <tr><th colspan="2">底色图案</th></tr>
        <tr><td>文件名称</td><td class="v">(无)</td></tr>
        <tr><td><label for="show">显示</label></td><td><input type="checkbox" id="show" checked></td></tr>
        <tr><td><label for="gray-on">灰阶</label></td><td><input type="checkbox" id="gray-on" checked></td></tr>
      </table>
    </div>
  </aside>
</main>

<form class="osnap">
  <label><input type="checkbox">最近点</label><label><input type="checkbox" checked>点</label><label><input type="checkbox" checked>中点</label><label><input type="checkbox">中心点</label><label><input type="checkbox" checked>交点</label><label><input type="checkbox" checked>垂点</label><label><input type="checkbox">切点</label><label><input type="checkbox">四分点</label><label><input type="checkbox">节点</label><label><input type="checkbox" checked>顶点</label><label><input type="checkbox" class="mute">投影</label><label class="far"><input type="checkbox" class="mute">停用</label>
</form>

<footer class="status">
  <span class="coord first">x -268.416</span><span class="coord">y -14.290</span><span class="coord">z</span><span class="coord">毫米</span>
  <button class="layer"><b></b>Layer 01</button>
  <button>锁定格点</button><button>正交</button><button class="on">平面模式</button><button class="on">物件锁点</button><button>智慧轨迹</button><button class="on">操作轴</button><button>记录建构历史</button><button>过滤器</button><span class="msg">距离上次保存的时间 (分钟): 1</span>
</footer>

<nav class="taskbar">
  <button aria-label="搜索"><svg viewBox="0 0 24 24"><circle cx="15" cy="10" r="8" fill="none" stroke="#fff" stroke-width="1.5"/></svg></button>
  <button aria-label="Cortana"><svg viewBox="0 0 24 24"><circle cx="12" cy="12" r="8.500" fill="none" stroke="#fff" stroke-width="2.5"/></svg></button>
  <button aria-label="任务视图"><svg viewBox="0 0 24 24"><path d="M2 3v3h13V3M2 21v-3h13v3M2 8h13v8H2zM20 3v18" fill="none" stroke="#fff" stroke-width="1.3"/><path d="M18 8h4v3h-4z" fill="#fff"/></svg></button>
  <button aria-label="浏览器"><svg viewBox="0 0 30 30"><circle cx="15" cy="15" r="12" fill="#57ba36" stroke="#d7f2c8" stroke-width="1.5"/><path d="M22 18Q19 22 15 22Q8 21 8 15T15 8Q22 8 22 15H9" fill="none" stroke="#fff" stroke-width="3.5"/><path d="M4 29Q-2 18 10 8Q18 1 26 2" fill="none" stroke="#4da52e" stroke-width="2.5"/></svg></button>
  <button class="run now" aria-label="Rhino"><svg viewBox="0 0 20 20"><use href="#rhino"/></svg></button>
  <button class="run" aria-label="文件资源管理器"><svg viewBox="0 0 30 30"><path d="M2 4h10l3 4h13v18H2z" fill="#e5a827"/><path d="M2 8h26v18H2z" fill="#fcd468"/><path d="M6 27V17h18v10h-5v-5h-8v5z" fill="#3f94d6"/></svg></button>
</nav>

<form class="dialog" role="dialog" aria-labelledby="dt">
  <header><svg viewBox="0 0 20 20"><use href="#rhino"/></svg><h2 id="dt">放样选项</h2><button type="button" aria-label="关闭"><svg viewBox="0 0 14 14"><path d="M1 1l12 12M13 1L1 13" stroke="#777"/></svg></button></header>
  <div class="group"><label for="style">样式(<u>S</u>)</label><hr></div>
  <div class="pick"><select id="style"><option>标准</option></select><svg viewBox="0 0 10 6"><path d="M.5.5L5 5L9.500.5" fill="none" stroke="#444"/></svg></div>
  <div class="checks">
    <label><input type="checkbox">封闭放样(C)</label>
    <label class="off"><input type="checkbox" disabled>与起始端边缘相切(T)</label>
    <label class="off"><input type="checkbox" disabled>与结束端边缘相切(E)</label>
    <label><input type="checkbox">在正切点分割(L)</label>
  </div>
  <div class="group second"><span>断面曲线选项</span><hr></div>
  <button type="button" class="align">对齐曲线...</button>
  <div class="radios">
    <label><input type="radio" name="s" checked>不要简化(D)</label>
    <div><label class="opt"><input type="radio" name="s">重建点数(R)</label><input type="text" id="n" value="10"><label for="n" class="unit">个控制点</label></div>
    <div><label class="opt"><input type="radio" name="s">重新逼近公差(F)</label><input type="text" id="t" value="0.001"><label for="t" class="unit">毫米</label></div>
  </div>
  <div class="actions"><button type="button">确定</button><button type="button">取消</button><button type="button">说明(H)</button></div>
</form>
</body>
</html>
```
FILE: styles.css
```css
* { box-sizing: border-box; }
body {
  margin: 0;
  height: 100vh;
  display: flex;
  flex-direction: column;
  overflow: hidden;
  position: relative;
  background: #e5e9ec;
  color: #000;
  font: 16px/20px "Open Sans", "Noto Sans CJK SC", sans-serif;
  white-space: nowrap;
}
.defs { position: absolute; width: 0; height: 0; }
button { font: inherit; color: inherit; padding: 0; border: 0; background: none; }
a { color: inherit; text-decoration: none; }
svg { display: block; }
h1, h2, p { margin: 0; font-weight: 400; }

/* title, menu and command history */
.titlebar { flex: none; display: flex; justify-content: space-between; align-items: center; height: 28px; margin-left: -6px; background: #fff; }
.titlebar h1 { font-size: 16px; }
.winbtns { display: flex; gap: 46px; margin-right: -11px; }
.winbtns svg { width: 12px; height: 12px; }
.menu { flex: none; display: flex; align-items: center; gap: 16px; height: 24px; margin-left: -29px; background: #fff; font-size: 15px; }
.history { flex: none; height: 59px; border-top: 3px solid #e5e9ec; background: #fff; font: 15px/13px "Noto Sans CJK SC", sans-serif; overflow: hidden; }
.history p { height: 19px; margin-left: -2px; white-space: pre; }
.history span { font: 13px/13px "Liberation Mono", monospace; }
.command { flex: none; width: 100%; height: 19px; padding: 0 4px; border: 0; border-top: 1px solid #b9c0c6; background: #fff; }

/* toolbars */
.toolbar { flex: none; display: flex; align-items: center; margin-left: -23px; }
.toolbar button { flex: none; width: 36px; height: 32px; padding: 0 2px; }
.toolbar svg { width: 32px; height: 32px; overflow: visible; }
.toolbar i { flex: none; width: 6px; height: 32px; border-left: 1px solid #b5b9bc; }
.surface { height: 45px; margin-top: 3px; border-top: 1px solid #d2d7db; border-bottom: 1px solid #d2d7db; }
.standard { height: 47px; padding-bottom: 6px; border-bottom: 1px solid #cdd2d8; }
.b { fill: url(#bl); stroke: #0a0f2c; stroke-width: 1.6; stroke-linejoin: round; }
.y { fill: url(#yel); stroke: #111; stroke-width: 1.6; stroke-linejoin: round; }
.s { fill: url(#ball); stroke: #0a0f2c; stroke-width: 1.6; }
.l { fill: none; stroke: #1d2c70; stroke-width: 0.9; }
.w { fill: none; stroke: #fff; stroke-width: 2; }
.h { fill: #fff; stroke: #000; }
.n { font: 14px "Open Sans", sans-serif; fill: #111; }
.q { font: bold 20px "Liberation Serif", serif; fill: #fff; }
.qs { font: bold 12px "Liberation Serif", serif; fill: #fff; }
.tabs { flex: none; display: flex; align-items: center; gap: 37px; height: 34px; margin-left: -7px; padding-top: 4px; border-bottom: 1px solid #b4babf; }

/* viewport */
main { flex: 1; min-height: 0; display: flex; gap: 8px; }
.left { flex: 1; min-width: 0; display: flex; flex-direction: column; }
.viewport { flex: 1; min-height: 0; position: relative; background: #bbbfbb; }
.scene { width: 100%; height: 100%; }
.axis { font: 16px "Open Sans", sans-serif; }
.viewname { position: absolute; left: 0; top: 0; height: 25px; display: flex; align-items: center; gap: 9px; padding-left: 8px; border-radius: 0 0 4px 0; background: #88a4c2; font-weight: 700; }
.viewname svg { width: 14px; height: 24px; }
.viewtabs { flex: none; height: 30px; display: flex; align-items: center; gap: 23px; padding-bottom: 1px; }
.viewtabs a.on { margin-right: -8px; padding: 4px 6px 4px 13px; border: 1px solid #bcc3d6; border-top: 0; border-left: 0; border-radius: 0 0 4px 4px; }
.viewtabs svg { width: 12px; height: 12px; }

/* properties panel */
.panel { flex: 0 0 505px; min-width: 0; display: flex; flex-direction: column; padding: 2px 0 4px; overflow: hidden; }
.ptabs { display: flex; flex: none; height: 30px; margin-right: -8px; }
.ptabs a { flex: 0 0 64px; display: flex; align-items: center; gap: 2px; padding-left: 3px; background: #d5d7d5; border-left: 1px solid #bfc3c6; border-bottom: 1px solid #c5c9cc; clip-path: polygon(0 0, 50px 0, 100% 14px, 100% 100%, 0 100%); font-size: 15px; }
.ptabs a.on { padding-left: 5px; background: #e5e9ec; border-bottom-color: #e5e9ec; }
.ptabs svg { width: 19px; height: 19px; flex: none; }
.pbody { flex: 1; min-height: 0; overflow: hidden; border-left: 1px solid #bcc1c5; border-bottom: 1px solid #bcc1c5; }
.ptools { display: flex; gap: 4px; padding: 3px 6px 13px; }
.ptools button { width: 35px; height: 35px; display: grid; place-items: center; }
.ptools button.on { background: #a6d1ea; }
.ptools svg { width: 30px; height: 30px; }
table { margin-left: 8px; width: calc(100% + 54px); border-collapse: separate; border-spacing: 0; table-layout: fixed; }
.cl { width: 278px; }
th { height: 33px; padding: 0; text-align: left; font-size: 19px; font-weight: 400; border-bottom: 1px solid #d7dbdf; }
td { height: 27px; padding: 0 0 0 5px; border-bottom: 1px solid #d9dde0; }
td:first-child { padding-left: 25px; border-right: 1px solid #d7dbdf; }
td.v { background: #fff; }
td.dim { color: #777a7c; }
td.act { padding: 1px 0 0 2px; }
td.act button { display: block; width: 100%; height: 25px; border: 1px solid #a5a9a7; background: #dfe1df; }
td input[type=checkbox] { margin: -2px 0 0 -1px; }

input[type=checkbox], input[type=radio] { appearance: none; flex: none; width: 16px; height: 16px; margin: 0; border: 1px solid #303230; background: #fff; display: inline-grid; place-items: center; vertical-align: middle; }
input[type=checkbox]:checked::after { content: ""; width: 5px; height: 10px; margin-top: -3px; border: solid #333; border-width: 0 1px 1px 0; rotate: 42deg; }
input[type=checkbox]:disabled { border-color: #c9cbc9; }
input[type=checkbox].mute { border-color: #b5b9b5; background: #d9ddd9; }
input[type=radio] { border-radius: 50%; }
input[type=radio]:checked::after { content: ""; width: 10px; height: 10px; border-radius: 50%; background: #2d302d; }

/* object snaps and status bar */
.osnap { flex: none; height: 37px; padding-top: 2px; display: flex; align-items: center; gap: 8px; margin-left: -32px; }
.osnap label { display: flex; align-items: center; gap: 4px; }
.osnap .far { margin-left: 16px; }
.status { flex: none; height: 22px; overflow: hidden; display: flex; border-top: 1px solid #bcc3d6; line-height: 24px; }
.status > * { flex: none; height: 24px; border-left: 1px solid #bcc3d6; padding: 0 6px; }
.status .coord { width: 108px; text-align: center; padding: 0; }
.status .first { margin-left: -22px; }
.status .layer { width: 208px; display: flex; align-items: center; gap: 4px; padding-left: 4px; }
.status .layer b { width: 14px; height: 14px; background: #f00; border: 1px solid #222; }
.status .on { font-weight: 700; background: #dcf1fb; }
.status .msg { padding: 0; }

.taskbar { flex: none; height: 50px; display: flex; margin-left: -38px; background: #1a1c1a; }
.taskbar button { width: 61px; height: 50px; display: grid; place-items: center; }
.taskbar svg { width: 24px; height: 24px; }
.taskbar button:nth-child(n+4) svg { width: 30px; height: 30px; }
.taskbar .run { width: 51px; margin-left: 6px; border-bottom: 3px solid #76b0dd; }
.taskbar .now { width: 61px; margin-left: 4px; background: #454845; }

/* loft options window */
.dialog { position: absolute; left: 795px; top: 234px; width: 406px; height: 479px; background: #eef0ee; border: 1px solid #9b9e9b; box-shadow: 2px 4px 12px rgba(0, 0, 0, .45); font-size: 15px; }
.dialog header { height: 37px; display: flex; align-items: center; gap: 4px; padding: 0 14px 0 9px; background: #fff; }
.dialog header > svg { width: 20px; height: 20px; }
.dialog h2 { flex: 1; font-size: 15px; color: #8b8d8b; }
.dialog header button svg { width: 14px; height: 14px; }
.group { display: flex; align-items: center; gap: 11px; height: 20px; margin: 19px 48px 0 16px; font-size: 16px; }
.group hr { flex: 1; height: 1px; margin: 0 0 2px; border: 0; background: #b9bbb9; }
.pick { position: relative; width: 243px; margin: 6px 0 0 32px; }
.pick select { appearance: none; display: block; width: 100%; height: 28px; padding: 0 3px; font: inherit; color: #000; background: #dfe1df; border: 1px solid #a0a3a0; border-radius: 0; }
.pick svg { position: absolute; right: 5px; top: 11px; width: 10px; height: 6px; }
.checks { display: grid; gap: 5px; margin: 14px 0 0 32px; }
.dialog label { display: flex; align-items: center; gap: 4px; }
.dialog .group label { gap: 0; }
.off { color: #858785; }
.second { margin-top: 29px; }
.dialog .align { width: 138px; height: 33px; margin: 10px 0 0 33px; }
.dialog .align, .actions button { display: block; border: 1px solid #a5a7a5; background: #dfe1df; }
.radios { display: grid; gap: 4px; margin: 11px 0 0 32px; }
.radios > div { display: grid; grid-template-columns: 161px 68px auto; height: 31px; align-items: center; }
.radios .opt { padding-top: 3px; }
.radios input[type=text] { width: 68px; height: 30px; padding: 0 3px 2px; font: inherit; border: 1px solid #5d605d; background: #fff; }
.radios .unit { margin-left: 4px; }
.actions { display: flex; gap: 5px; margin: 13px 0 0 102px; }
.actions button { width: 81px; height: 33px; }
```
